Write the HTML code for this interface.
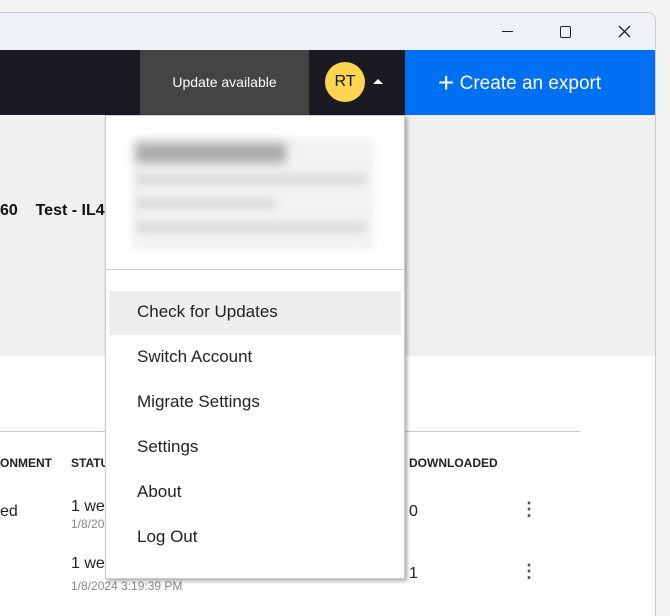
<!DOCTYPE html><html><head><style>
body{margin:0;width:670px;height:615px;background:#f3f3f3;font-family:"Liberation Sans",sans-serif;position:relative;overflow:hidden}
.a{position:absolute}
.item{position:absolute;left:31px;font-size:17px;color:#222}
</style></head><body>
<div class="a" style="left:0;top:12px;width:655px;height:603px;background:#fff;border-right:1px solid #ccc;border-top:1px solid #ccc;border-top-right-radius:8px;overflow:hidden">
 <div class="a" style="left:0;top:0;width:655px;height:37px;background:#eef2f7"></div>
 <div class="a" style="left:502px;top:18px;width:11px;height:1px;background:#222"></div>
 <div class="a" style="left:560px;top:13px;width:9px;height:10px;border:1.3px solid #222;border-radius:2px"></div>
 <svg class="a" style="left:618px;top:12px" width="13" height="13"><path d="M1 1L12 12M12 1L1 12" stroke="#222" stroke-width="1.3"/></svg>
 <div class="a" style="left:0;top:37px;width:655px;height:65px;background:#1b1a22"></div>
 <div class="a" style="left:140px;top:37px;width:169px;height:65px;background:#444;color:#fff;font-size:14px;line-height:65px;text-align:center">Update available</div>
 <div class="a" style="left:325px;top:49px;width:40px;height:40px;border-radius:50%;background:#fdd54f;color:#111;font-size:16px;line-height:40px;text-align:center">RT</div>
 <div class="a" style="left:373px;top:66px;width:0;height:0;border-left:5px solid transparent;border-right:5px solid transparent;border-bottom:5px solid #fff"></div>
 <div class="a" style="left:405px;top:37px;width:250px;height:65px;background:#0070f3;color:#fff;font-size:19px;line-height:65px"><span style="font-size:28px;font-weight:300;margin-left:33px;vertical-align:-3px">+</span> Create an export</div>
 <div class="a" style="left:0;top:102px;width:655px;height:241px;background:#f0f0f0"></div>
 <div class="a" style="left:0;top:189px;font-size:16px;font-weight:bold;color:#111">60&nbsp;&nbsp;&nbsp;&nbsp;Test - IL4</div>
 <div class="a" style="left:0;top:418px;width:580px;height:1px;background:#ccc"></div>
 <div class="a" style="left:0;top:443px;font-size:12px;font-weight:bold;color:#222">ONMENT</div>
 <div class="a" style="left:71px;top:443px;font-size:12px;font-weight:bold;color:#222">STATUS</div>
 <div class="a" style="left:409px;top:443px;font-size:12px;font-weight:bold;color:#222">DOWNLOADED</div>
 <div class="a" style="left:0;top:490px;font-size:16px;color:#222">ed</div>
 <div class="a" style="left:71px;top:485px;font-size:16px;color:#222">1 week ago</div>
 <div class="a" style="left:71px;top:504px;font-size:12px;color:#888">1/8/2024 3:19:39 PM</div>
 <div class="a" style="left:71px;top:542px;font-size:16px;color:#222">1 week ago</div>
 <div class="a" style="left:71px;top:566px;font-size:12px;color:#888">1/8/2024 3:19:39 PM</div>
 <div class="a" style="left:409px;top:490px;font-size:16px;color:#222">0</div>
 <div class="a" style="left:409px;top:552px;font-size:16px;color:#222">1</div>
 <div class="a" style="left:520px;top:486px;font-size:18px;color:#555;font-weight:bold">⋮</div>
 <div class="a" style="left:520px;top:548px;font-size:18px;color:#555;font-weight:bold">⋮</div>
</div>
<div class="a" style="left:105px;top:115px;width:298px;height:462px;background:#fff;border:1px solid #ccc;box-shadow:2px 2px 4px rgba(0,0,0,.35)">
 <div class="a" style="left:25px;top:21px;width:243px;height:112px;background:#f3f3f3;filter:blur(3px)"></div>
 <div class="a" style="left:30px;top:27px;width:150px;height:20px;background:#aaa;filter:blur(5px)"></div>
 <div class="a" style="left:30px;top:57px;width:230px;height:12px;background:#ddd;filter:blur(4px)"></div>
 <div class="a" style="left:30px;top:81px;width:140px;height:12px;background:#ddd;filter:blur(4px)"></div>
 <div class="a" style="left:30px;top:105px;width:230px;height:12px;background:#ddd;filter:blur(4px)"></div>
 <div class="a" style="left:0;top:153px;width:298px;height:1px;background:#ccc"></div>
 <div class="a" style="left:3px;top:175px;width:292px;height:44px;background:#eee"></div>
 <div class="item" style="top:186px">Check for Updates</div>
 <div class="item" style="top:231px">Switch Account</div>
 <div class="item" style="top:276px">Migrate Settings</div>
 <div class="item" style="top:321px">Settings</div>
 <div class="item" style="top:366px">About</div>
 <div class="item" style="top:411px">Log Out</div>
</div>
</body></html>
